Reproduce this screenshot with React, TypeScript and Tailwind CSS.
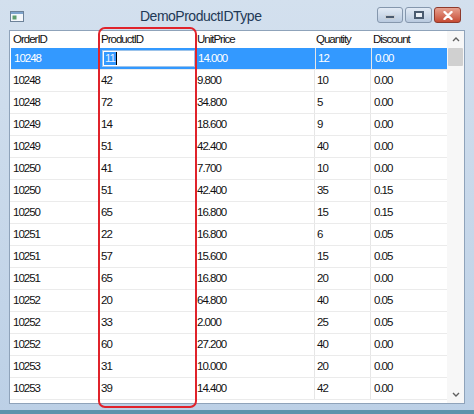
import React from "react";

const rows: [string, string, string, string, string][] = [
  ["10248", "11", "14.000", "12", "0.00"],
  ["10248", "42", "9.800", "10", "0.00"],
  ["10248", "72", "34.800", "5", "0.00"],
  ["10249", "14", "18.600", "9", "0.00"],
  ["10249", "51", "42.400", "40", "0.00"],
  ["10250", "41", "7.700", "10", "0.00"],
  ["10250", "51", "42.400", "35", "0.15"],
  ["10250", "65", "16.800", "15", "0.15"],
  ["10251", "22", "16.800", "6", "0.05"],
  ["10251", "57", "15.600", "15", "0.05"],
  ["10251", "65", "16.800", "20", "0.00"],
  ["10252", "20", "64.800", "40", "0.05"],
  ["10252", "33", "2.000", "25", "0.05"],
  ["10252", "60", "27.200", "40", "0.00"],
  ["10253", "31", "10.000", "20", "0.00"],
  ["10253", "39", "14.400", "42", "0.00"],
];

const headers = ["OrderID", "ProductID", "UnitPrice", "Quantity", "Discount"];

const AppIcon = () => (
  <svg width="14" height="11" viewBox="0 0 14 11">
    <rect x="0.5" y="0.5" width="13" height="10" fill="#f4f7fb" stroke="#6d8299" />
    <rect x="1" y="1" width="12" height="2" fill="#7ea4cc" />
    <rect x="2.5" y="4.5" width="4" height="4" fill="#5f9d6e" />
  </svg>
);

const WinButtons = () => (
  <div className="flex items-start gap-[2px]">
    <div className="w-[26px] h-[16px] rounded-[3px] border border-[#8597ad] bg-gradient-to-b from-[#e3ebf5] to-[#b9cadf] flex items-center justify-center">
      <div className="w-[10px] h-[4px] bg-[#4a5b70] mt-[4px] border border-white/70" />
    </div>
    <div className="w-[27px] h-[16px] rounded-[3px] border border-[#8597ad] bg-gradient-to-b from-[#e3ebf5] to-[#b9cadf] flex items-center justify-center">
      <div className="w-[10px] h-[8px] border-2 border-[#4a5b70] bg-white/60" />
    </div>
    <div className="w-[27px] h-[16px] rounded-[3px] border border-[#8e3a2c] bg-gradient-to-b from-[#e6a08f] to-[#c64a33] flex items-center justify-center">
      <svg width="10" height="9" viewBox="0 0 10 9">
        <path d="M1.5 1 L8.5 8 M8.5 1 L1.5 8" stroke="#ffffff" strokeWidth="2.4" strokeLinecap="round" />
      </svg>
    </div>
  </div>
);

const widths = ["w-[88px]", "w-[97px]", "w-[119px]", "w-[56px]", "w-[77px]"];
const pads = ["pl-[3px]", "pl-[3px]", "pl-[2px]", "pl-[2px]", "pl-[3px]"];

export default function App() {
  return (
    <div
      className="w-[474px] h-[414px] relative overflow-hidden bg-gradient-to-b from-[#d3e0ee] to-[#bcd0e6] flex flex-col"
      style={{ fontFamily: '"Liberation Sans", Arial, sans-serif' }}
    >
      {/* title bar */}
      <div className="h-[30px] flex items-start relative shrink-0">
        <div className="absolute left-[10px] top-[11px]">
          <AppIcon />
        </div>
        <div className="absolute left-[140px] top-[6px] text-[14px] tracking-[-0.5px] text-[#1e3956]">
          DemoProductIDType
        </div>
        <div className="absolute left-[377px] top-[7px]">
          <WinButtons />
        </div>
      </div>

      {/* client area */}
      <div className="mx-[9px] h-[374px] bg-white border border-[#8fa3ba] flex">
        <div className="w-[437px] flex flex-col text-[11.5px] tracking-[-1px] text-[#111111]">
          <div className="h-[17px] flex items-center">
            {headers.map((h, i) => (
              <div key={h} className={`${widths[i]} ${pads[i]} shrink-0`}>
                {h}
              </div>
            ))}
          </div>
          {rows.map((r, ri) => {
            const sel = ri === 0;
            return (
              <div
                key={ri}
                className={`h-[22px] flex items-stretch border-b border-[#ebebeb] ${
                  sel ? "bg-[#3399ff] text-white ml-[1px]" : ""
                }`}
              >
                {r.map((c, ci) => (
                  <div
                    key={ci}
                    className={`${widths[ci]} ${pads[ci]} shrink-0 flex items-center ${
                      ci >= 3 ? "border-l border-[#e6e6e6]" : ""
                    }`}
                  >
                    {sel && ci === 1 ? (
                      <div className="w-[93px] h-[17px] bg-white border border-[#9cc3ea] flex items-center pl-[1px] text-[#1b1b1b]">
                        <span className="bg-[#3399ff] text-[#e6f2ff] leading-[13px] px-[1px]">11</span>
                        <span className="w-[1px] h-[13px] bg-black" />
                      </div>
                    ) : (
                      c
                    )}
                  </div>
                ))}
              </div>
            );
          })}
        </div>

        {/* scrollbar */}
        <div className="w-[17px] flex flex-col items-center bg-[#f7f7f7]">
          <div className="h-[17px] flex items-center justify-center">
            <svg width="8" height="5" viewBox="0 0 8 5">
              <path d="M1 4 L4 1 L7 4" stroke="#606060" strokeWidth="1.4" fill="none" />
            </svg>
          </div>
          <div className="w-[15px] h-[18px] bg-[#d0d0d0] rounded-[1px]" />
          <div className="flex-1" />
          <div className="h-[17px] flex items-center justify-center">
            <svg width="8" height="5" viewBox="0 0 8 5">
              <path d="M1 1 L4 4 L7 1" stroke="#606060" strokeWidth="1.4" fill="none" />
            </svg>
          </div>
        </div>
      </div>

      <div className="flex-1" />
      <div className="h-[4px] bg-[#5e93ab]" />

      {/* red highlight */}
      <div className="absolute left-[98px] top-[27px] w-[99px] h-[381px] border-2 border-[#e0232b] rounded-[7px] pointer-events-none" />
    </div>
  );
}
